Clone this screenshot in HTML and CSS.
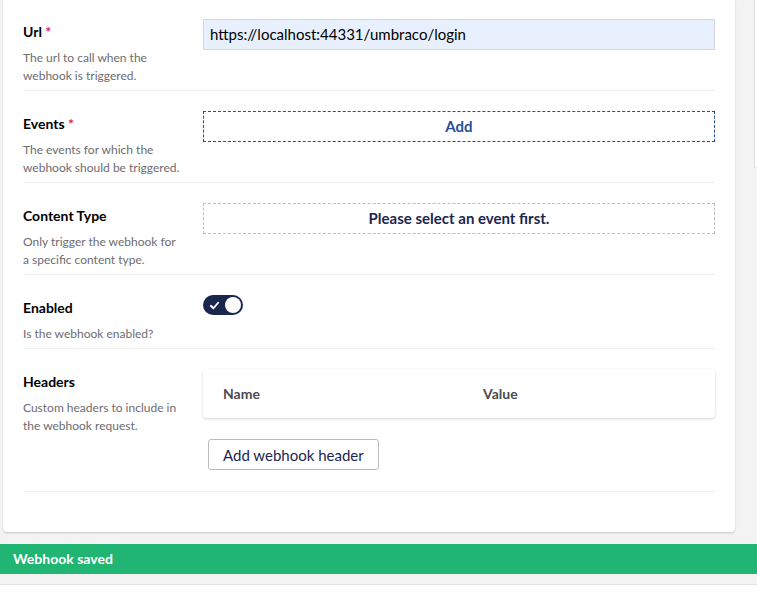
FILE: index.html
```html
<!DOCTYPE html>
<html lang="en">
<head>
<meta charset="utf-8">
<title>Webhook</title>
<link rel="stylesheet" href="styles.css">
</head>
<body>
<div class="top">
  <div class="card">
    <div class="row">
      <div class="label-col">
        <div class="label">Url <span class="req">*</span></div>
        <div class="desc">The url to call when the webhook is triggered.</div>
      </div>
      <div class="field-col">
        <div class="input">https://localhost:44331/umbraco/login</div>
      </div>
    </div>
    <div class="row">
      <div class="label-col">
        <div class="label">Events <span class="req">*</span></div>
        <div class="desc">The events for which the webhook should be triggered.</div>
      </div>
      <div class="field-col">
        <div class="placeholder add">Add</div>
      </div>
    </div>
    <div class="row">
      <div class="label-col">
        <div class="label">Content Type</div>
        <div class="desc">Only trigger the webhook for a specific content type.</div>
      </div>
      <div class="field-col">
        <div class="placeholder muted">Please select an event first.</div>
      </div>
    </div>
    <div class="row">
      <div class="label-col">
        <div class="label">Enabled</div>
        <div class="desc">Is the webhook enabled?</div>
      </div>
      <div class="field-col">
        <div class="toggle">
          <svg class="check" viewBox="0 0 12 12" width="11" height="11"><path d="M2 6.3 L4.8 9 L10 3" fill="none" stroke="#fff" stroke-width="2" stroke-linecap="round" stroke-linejoin="round"/></svg>
          <span class="knob"></span>
        </div>
      </div>
    </div>
    <div class="row last">
      <div class="label-col">
        <div class="label">Headers</div>
        <div class="desc">Custom headers to include in the webhook request.</div>
      </div>
      <div class="field-col">
        <div class="table-head">
          <span>Name</span>
          <span>Value</span>
        </div>
        <div class="btn">Add webhook header</div>
      </div>
    </div>
  </div>
  <div class="side"></div>
</div>
<div class="toast">Webhook saved</div>
<div class="footer"></div>
</body>
</html>
```
FILE: styles.css
```css
* { box-sizing: border-box; }
html, body { margin: 0; padding: 0; }
body {
  background: #f4f3f3;
  font-family: Lato, "Open Sans", sans-serif;
  color: #000;
  height: 606px;
  overflow: hidden;
}
.top {
  display: grid;
  grid-template-columns: 732px 1fr;
  column-gap: 19px;
  padding-left: 3px;
  align-items: start;
}
.card {
  background: #fff;
  border-radius: 0 0 4px 4px;
  box-shadow: 0 1px 2px rgba(0,0,0,0.18);
  padding: 0 20px 40px;
}
.side {
  height: 168px;
  background: #fff;
  border-left: 1px solid #dcdcdc;
  border-bottom: 1px solid #e6e6e6;
}
.row {
  display: grid;
  grid-template-columns: 180px 1fr;
  padding: 20px 0 5px;
  border-bottom: 1px solid #efefef;
}
.row:first-child { padding-top: 19px; }
.label-col { display: flex; flex-direction: column; }
.label {
  font-size: 14px;
  font-weight: 700;
  line-height: 25px;
  margin-bottom: 5px;
}
.req { color: #d42054; font-weight: 700; }
.desc {
  font-size: 12px;
  line-height: 18px;
  color: #6d6c70;
  padding-right: 20px;
}
.field-col { padding-bottom: 16px; }
.input {
  height: 31px;
  background: #e8f0fe;
  border: 1px solid #d6d7db;
  font-size: 15px;
  line-height: 29px;
  padding-left: 6px;
  color: #000;
}
.placeholder {
  height: 31px;
  display: flex;
  align-items: center;
  justify-content: center;
  font-size: 15px;
  font-weight: 700;
  padding-bottom: 2px;
}
.add {
  border: 1px dashed #1f4fa3;
  color: #2b4d99;
}
.muted {
  border: 1px dashed #bdbdbd;
  color: #1b264f;
}
.toggle {
  width: 40px;
  height: 20px;
  border-radius: 10px;
  background: #1b264f;
  display: flex;
  align-items: center;
  justify-content: space-between;
  padding: 0 2px 0 6px;
}
.check { display: block; }
.knob {
  width: 16px;
  height: 16px;
  border-radius: 50%;
  background: #fff;
}
.table-head {
  height: 49px;
  border-radius: 4px;
  box-shadow: 0 1px 3px rgba(0,0,0,0.17);
  display: grid;
  grid-template-columns: 260px 1fr;
  align-items: center;
  padding-left: 20px;
  padding-bottom: 1px;
  font-size: 14px;
  font-weight: 700;
  color: #4c4b50;
}
.btn {
  display: inline-flex;
  align-items: center;
  margin: 21px 0 0 5px;
  height: 31px;
  padding: 0 14px;
  border: 1px solid #bbbbbb;
  border-radius: 3px;
  font-size: 15px;
  color: #1b264f;
}
.toast {
  margin-top: 12px;
  height: 30px;
  background: #20b572;
  color: #fff;
  font-size: 14px;
  font-weight: 700;
  line-height: 30px;
  padding-left: 13px;
}
.footer {
  margin-top: 10px;
  border-top: 1px solid #e2e2e2;
  background: #fff;
  height: 40px;
}
```
